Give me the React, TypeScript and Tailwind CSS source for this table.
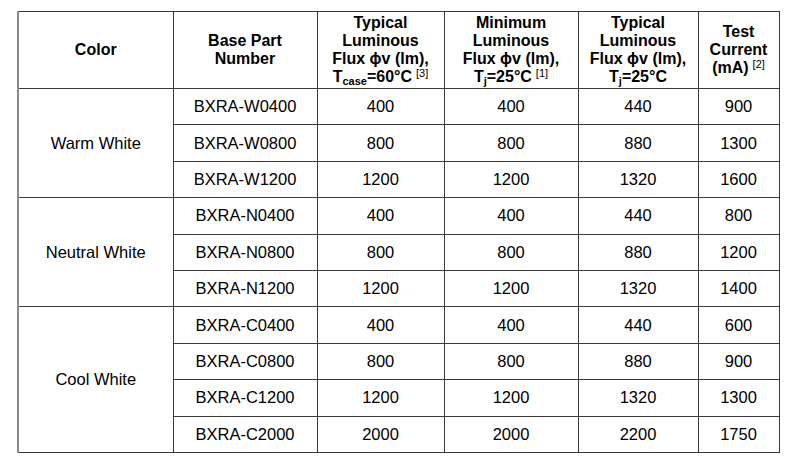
const groups = [
  {
    color: "Warm White",
    rows: [
      ["BXRA-W0400", "400", "400", "440", "900"],
      ["BXRA-W0800", "800", "800", "880", "1300"],
      ["BXRA-W1200", "1200", "1200", "1320", "1600"],
    ],
  },
  {
    color: "Neutral White",
    rows: [
      ["BXRA-N0400", "400", "400", "440", "800"],
      ["BXRA-N0800", "800", "800", "880", "1200"],
      ["BXRA-N1200", "1200", "1200", "1320", "1400"],
    ],
  },
  {
    color: "Cool White",
    rows: [
      ["BXRA-C0400", "400", "400", "440", "600"],
      ["BXRA-C0800", "800", "800", "880", "900"],
      ["BXRA-C1200", "1200", "1200", "1320", "1300"],
      ["BXRA-C2000", "2000", "2000", "2200", "1750"],
    ],
  },
];

const Sup = ({ n }: { n: number }) => (
  <sup className="ml-1 text-[11px] font-normal">[{n}]</sup>
);

export default function App() {
  return (
    <div className="h-[466px] w-[800px] bg-white pl-[17px] pt-[11px] font-['Liberation_Sans',Arial,sans-serif] text-black">
      <table className="w-[761px] table-fixed border-collapse border-l-2 border-l-[#8a8a8a] text-center text-[16.5px]">
        <colgroup>
          <col className="w-[155px]" />
          <col className="w-[144px]" />
          <col className="w-[127px]" />
          <col className="w-[134px]" />
          <col className="w-[120px]" />
          <col className="w-[81px]" />
        </colgroup>
        <thead>
          <tr className="h-[77px] text-[16px] font-bold leading-[18px]">
            <th className="border border-[#3a3a3a]">Color</th>
            <th className="border border-[#3a3a3a]">
              Base Part
              <br />
              Number
            </th>
            <th className="border border-[#3a3a3a]">
              Typical
              <br />
              Luminous
              <br />
              Flux ϕv (lm),
              <br />
              T<sub className="text-[11px]">case</sub>=60°C
              <Sup n={3} />
            </th>
            <th className="border border-[#3a3a3a]">
              Minimum
              <br />
              Luminous
              <br />
              Flux ϕv (lm),
              <br />
              T<sub className="text-[11px]">j</sub>=25°C
              <Sup n={1} />
            </th>
            <th className="border border-[#3a3a3a]">
              Typical
              <br />
              Luminous
              <br />
              Flux ϕv (lm),
              <br />
              T<sub className="text-[11px]">j</sub>=25°C
            </th>
            <th className="border border-[#3a3a3a]">
              Test
              <br />
              Current
              <br />
              (mA)
              <Sup n={2} />
            </th>
          </tr>
        </thead>
        <tbody>
          {groups.map((g) =>
            g.rows.map((r, i) => (
              <tr key={r[0]} className="h-[36.4px]">
                {i === 0 && (
                  <td rowSpan={g.rows.length} className="border border-[#3a3a3a]">
                    {g.color}
                  </td>
                )}
                {r.map((v, j) => (
                  <td key={j} className="border border-[#3a3a3a]">
                    {v}
                  </td>
                ))}
              </tr>
            ))
          )}
        </tbody>
      </table>
    </div>
  );
}
